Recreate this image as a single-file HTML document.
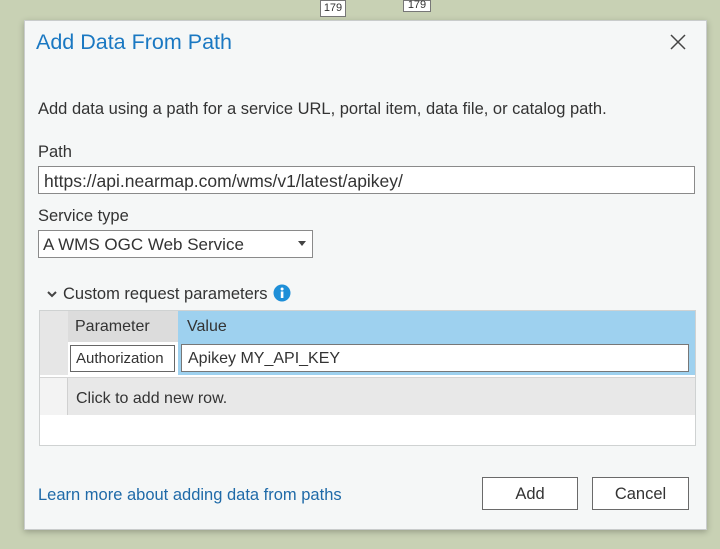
<!DOCTYPE html>
<html><head><meta charset="utf-8"><style>
*{margin:0;padding:0;box-sizing:border-box}
body{width:720px;height:549px;overflow:hidden;background:#c8d1b4;font-family:"Liberation Sans",sans-serif;color:#333;position:relative;font-size:16.5px}
.a{position:absolute;white-space:nowrap}
.dlg{position:absolute;left:24px;top:20px;width:683px;height:510px;background:#f5f7f7;border:1px solid #c9cccc;box-shadow:0 2px 6px rgba(0,0,0,.25)}
.box{position:absolute;background:#fff;border:1px solid #8a8a8a}
.btn{position:absolute;background:#fff;border:1px solid #6a6a6a;text-align:center;line-height:33px;font-size:16.5px;color:#333}
</style></head><body>
<div class="a" style="left:320px;top:0;width:26px;height:17px;background:#fff;border:1px solid #777;font-size:11px;text-align:center;line-height:15px">179</div>
<div class="a" style="left:403px;top:0;width:28px;height:12px;background:#fff;border:1px solid #777;font-size:11px;text-align:center;line-height:9px">179</div>
<div class="dlg"></div>
<div class="a" style="left:36px;top:30px;font-size:21.5px;color:#1a78c2">Add Data From Path</div>
<svg class="a" style="left:670px;top:34px" width="16" height="16"><path d="M1 1L15 15M15 1L1 15" stroke="#444" stroke-width="1.5"/></svg>
<div class="a" style="left:38px;top:100px">Add data using a path for a service URL, portal item, data file, or catalog path.</div>
<div class="a" style="left:38px;top:143px">Path</div>
<div class="box" style="left:38px;top:166px;width:657px;height:28px"></div>
<div class="a" style="left:44px;top:171px;font-size:17.5px">https://api.nearmap.com/wms/v1/latest/apikey/</div>
<div class="a" style="left:38px;top:207px">Service type</div>
<div class="box" style="left:38px;top:230px;width:275px;height:28px"></div>
<div class="a" style="left:43px;top:235px;font-size:17px">A WMS OGC Web Service</div>
<svg class="a" style="left:298px;top:241px" width="8" height="5"><path d="M0 0H8L4 5Z" fill="#444"/></svg>
<svg class="a" style="left:47px;top:291px" width="10" height="7"><path d="M1 1L5 5L9 1" stroke="#444" stroke-width="2" fill="none"/></svg>
<div class="a" style="left:63px;top:285px">Custom request parameters</div>
<svg class="a" style="left:273px;top:284px" width="18" height="18"><circle cx="9" cy="9" r="8.5" fill="#1e8fd8"/><rect x="7.8" y="7.5" width="2.6" height="6.5" fill="#fff"/><circle cx="9.1" cy="5" r="1.5" fill="#fff"/></svg>
<div class="a" style="left:39px;top:310px;width:657px;height:136px;background:#fff;border:1px solid #cfd2d2"></div>
<div class="a" style="left:40px;top:311px;width:28px;height:64px;background:#e6e6e6"></div>
<div class="a" style="left:68px;top:311px;width:110px;height:31px;background:#dcdcdc"></div>
<div class="a" style="left:178px;top:311px;width:517px;height:31px;background:#9ed1ef"></div>
<div class="a" style="left:75px;top:318px;font-size:16px">Parameter</div>
<div class="a" style="left:187px;top:318px;font-size:16px">Value</div>
<div class="a" style="left:178px;top:342px;width:517px;height:33px;background:#9ed1ef"></div>
<div class="box" style="left:70px;top:345px;width:105px;height:27px;border-color:#666"></div>
<div class="a" style="left:76px;top:350px;font-size:15px">Authorization</div>
<div class="box" style="left:181px;top:344px;width:508px;height:28px;border-color:#777"></div>
<div class="a" style="left:188px;top:350px;font-size:16px">Apikey MY_API_KEY</div>
<div class="a" style="left:40px;top:377px;width:655px;height:38px;background:#e8e8e8;border-top:1px solid #d4d4d4"></div>
<div class="a" style="left:40px;top:378px;width:28px;height:37px;background:#f3f3f3;border-right:1px solid #d0d0d0"></div>
<div class="a" style="left:76px;top:390px;font-size:16px">Click to add new row.</div>
<div class="a" style="left:38px;top:486px;color:#1f6aa8">Learn more about adding data from paths</div>
<div class="btn" style="left:482px;top:477px;width:96px;height:33px">Add</div>
<div class="btn" style="left:592px;top:477px;width:97px;height:33px">Cancel</div>
</body></html>
